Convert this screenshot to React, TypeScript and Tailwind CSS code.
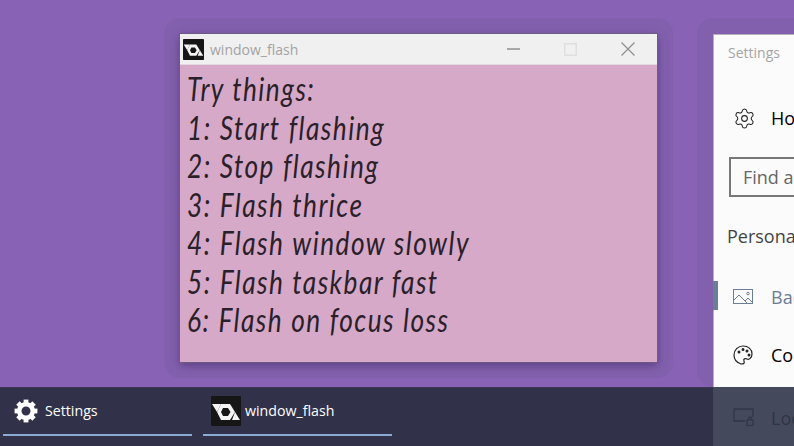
import { Settings } from "lucide-react";

const lines = [
  "Try things:",
  "1: Start flashing",
  "2: Stop flashing",
  "3: Flash thrice",
  "4: Flash window slowly",
  "5: Flash taskbar fast",
  "6: Flash on focus loss",
];

function AppLogo({ size }: { size: number }) {
  return (
    <svg width={size} height={size} viewBox="0 0 30 30" className="shrink-0">
      <rect width="30" height="30" rx="1" fill="#161616" />
      <path
        fillRule="evenodd"
        fill="#f4f4f4"
        d="M10 8h9l5 8-5 8h-9l-4-8zM12 12l-2 4 2 4h5l2.5-4-2.5-4z"
      />
      <path fill="#f4f4f4" d="M1 8h9l-4 8zM19 8l10 16h-8l3-8z" />
    </svg>
  );
}

// solid cog used on the taskbar button
function TaskbarCog() {
  return (
    <svg width="24" height="24" viewBox="0 0 24 24" className="ml-[11px] mr-[7px] shrink-0">
      <circle cx="12" cy="12" r="6.8" fill="none" stroke="#fff" strokeWidth="4.6" />
      {[0, 45, 90, 135, 180, 225, 270, 315].map((a) => (
        <rect key={a} x="9.6" y="0.6" width="4.8" height="5" fill="#fff" transform={`rotate(${a} 12 12)`} />
      ))}
    </svg>
  );
}

function TaskItem({ icon, label }: { icon: React.ReactNode; label: string }) {
  return (
    <div className="w-[189px] h-[48px] flex items-center border-b-2 border-[#8aa9d3]">
      {icon}
      <span className="text-[14.2px] text-white">{label}</span>
    </div>
  );
}

export default function App() {
  return (
    <div className="relative w-[794px] h-[446px] overflow-hidden bg-[#8762b5] font-['Open_Sans','Noto_Sans',sans-serif]">
      {/* halos behind the two windows */}
      <div className="absolute left-[164px] top-[18px] w-[509px] h-[360px] rounded-[16px] bg-[#8260ae]" />
      <div className="absolute left-[697px] top-[18px] w-[200px] h-[369px] rounded-[16px] bg-[#8260ae]" />

      <div className="absolute left-[180px] top-[34px] w-[477px] h-[328px] flex flex-col bg-[#d5a9c7] outline outline-1 outline-[#6f5a86] shadow-[0_3px_9px_rgba(70,45,105,0.7)]">
        <div className="h-[31px] shrink-0 flex items-center bg-[#f0f0f0] border-b border-[#e4d8e0]">
          <div className="ml-[3px] mr-[6px]">
            <AppLogo size={21} />
          </div>
          <span className="text-[14px] text-[#a3a3a3]">window_flash</span>
          <div className="ml-auto flex items-center mr-[22px]">
            <svg width="13" height="2" viewBox="0 0 13 2" className="mr-[44px]">
              <rect width="13" height="2" fill="#a8a8a8" />
            </svg>
            <svg width="13" height="13" viewBox="0 0 13 13" className="mr-[44px]">
              <rect x="0.75" y="0.75" width="11.5" height="11.5" fill="none" stroke="#dfdfdf" strokeWidth="1.5" />
            </svg>
            <svg width="14" height="14" viewBox="0 0 14 14">
              <path d="M0.5 0.5l13 13M13.5 0.5l-13 13" stroke="#8c8c8c" strokeWidth="1.1" />
            </svg>
          </div>
        </div>
        <div className="pl-[7px] pt-[5px]">
          {lines.map((line) => (
            <div
              key={line}
              className="h-[38.5px] leading-[38.5px] text-[32px] italic tracking-[1.8px] [word-spacing:0.5px] text-[#2a2029] origin-left scale-x-[0.82] whitespace-nowrap font-['Lato','Open_Sans',sans-serif]"
            >
              {line}
            </div>
          ))}
        </div>
      </div>

      {/* settings window, cut off by the screen edge */}
      <div className="absolute left-[713px] top-[34px] w-[200px] h-[353px] bg-[#fbfbfb] border-l border-t border-[#b5b0bb]">
        <div className="pl-[14px] pt-[8px] text-[14px] leading-[19px] text-[#a5a5a5]">Settings</div>
        <div className="flex items-center pl-[19px] mt-[41px] h-[30px]">
          <Settings size={23} strokeWidth={1.1} className="text-[#222]" />
          <span className="ml-[15px] text-[18px] text-black">Home</span>
        </div>
        <div className="ml-[15px] mt-[24px] w-[170px] h-[40px] border-2 border-[#777] flex items-center pl-[12px] text-[18px] text-[#666]">
          Find a setting
        </div>
        <div className="pl-[13px] mt-[27px] text-[18px] leading-[25px] text-[#444]">Personalization</div>
      </div>
      <div className="absolute left-[713px] top-[281px] w-[5px] h-[29px] bg-[#6c7d96]" />
      <div className="absolute left-[733px] top-[288px] flex items-center">
        <svg width="20" height="16" viewBox="0 0 20 16" fill="none" stroke="#6c7d96" strokeWidth="1">
          <rect x="0.5" y="0.5" width="19" height="14" />
          <path d="M1 11l5-5 9 9M12 12l3-3 4 4" />
          <circle cx="15" cy="4.5" r="1.3" />
        </svg>
        <span className="ml-[18px] text-[18px] leading-[18px] text-[#6c7d96]">Background</span>
      </div>
      <div className="absolute left-[733px] top-[345px] flex items-center">
        <svg width="20" height="20" viewBox="0 0 20 20" fill="none" stroke="#222" strokeWidth="1.2">
          <path d="M10 1c5 0 9 3 9 8 0 4-3 6-5 5-2-1-4 0-3 2 1 3-1 3-3 3-3-1-7-4-7-9 0-5 4-9 9-9z" />
          <circle cx="6" cy="7" r="0.9" fill="#222" />
          <circle cx="10" cy="4.5" r="0.9" fill="#222" />
          <circle cx="14" cy="6" r="0.9" fill="#222" />
          <circle cx="16" cy="10" r="0.9" fill="#222" />
        </svg>
        <span className="ml-[18px] text-[18px] leading-[18px] text-black">Colors</span>
      </div>

      {/* taskbar */}
      <div className="absolute left-0 right-0 top-[387px] h-[59px] bg-[#31324a] border-t border-[#3a3654] flex gap-[11px] pl-[3px]">
        <TaskItem icon={<TaskbarCog />} label="Settings" />
        <TaskItem
          icon={
            <div className="ml-[8px] mr-[4px]">
              <AppLogo size={30} />
            </div>
          }
          label="window_flash"
        />
      </div>
      <div className="absolute left-[713px] top-[387px] w-[81px] h-[59px] bg-[#444a5b]">
        <div className="absolute left-[20px] top-[21px]">
          <svg width="21" height="19" viewBox="0 0 21 19" fill="none" stroke="#31364a" strokeWidth="1.3">
            <path d="M12 13H1V1h19v8" />
            <rect x="14" y="12" width="6" height="5.5" />
            <path d="M15.5 12v-1.5a1.5 1.5 0 0 1 3 0V12" />
          </svg>
        </div>
        <span className="absolute left-[58px] top-[18px] text-[18px] text-[#2f3447]">Lock</span>
      </div>
    </div>
  );
}
